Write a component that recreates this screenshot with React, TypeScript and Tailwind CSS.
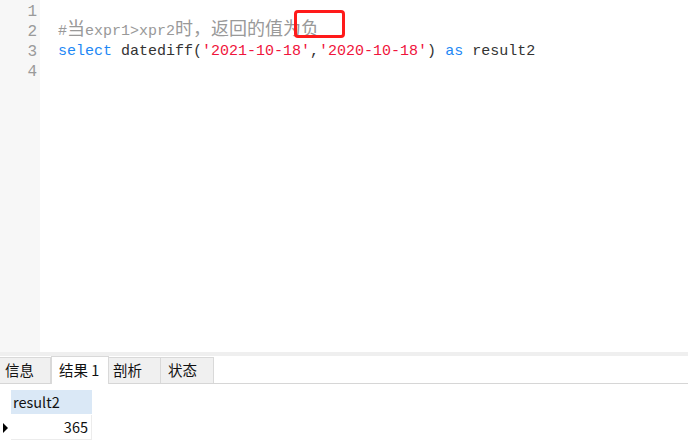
import React from "react";

const mono = { fontFamily: '"Liberation Mono", "DejaVu Sans Mono", monospace' };
const cjk = "font-['Noto_Sans_CJK_SC',sans-serif] text-[18px] leading-[10px]";

export default function App() {
  return (
    <div className="relative w-[688px] h-[440px] bg-white flex flex-col overflow-hidden font-['Noto_Sans_CJK_SC',sans-serif]">
      {/* Editor */}
      <div className="flex h-[352px]">
        <div className="w-[40px] bg-[#f7f7f7] pt-[2px] text-right pr-[3px] text-[16px] leading-[20px] text-[#9a9a9a]" style={mono}>
          <div className="h-[20px]">1</div>
          <div className="h-[20px]">2</div>
          <div className="h-[20px]">3</div>
          <div className="h-[20px]">4</div>
        </div>
        <div className="flex-1 pl-[18px] pt-[2px] text-[15px] leading-[20px] text-[#333] whitespace-pre" style={mono}>
          <div className="h-[20px]">&nbsp;</div>
          <div className="h-[20px] text-[#999]">
            #<span className={cjk}>当</span>expr1&gt;xpr2<span className={cjk}>时，返回的值为负</span>
          </div>
          <div className="h-[20px]">
            <span className="text-[#1e88f5]">select</span> datediff(
            <span className="text-[#f0143c]">'2021-10-18'</span>,
            <span className="text-[#f0143c]">'2020-10-18'</span>) <span className="text-[#1e88f5]">as</span> result2
          </div>
          <div className="h-[20px]">&nbsp;</div>
        </div>
      </div>
      {/* Splitter */}
      <div className="h-[4px] bg-[#efefef]" />
      {/* Tabs */}
      <div className="h-[28px] flex items-end border-b border-[#d6d6d6] text-[14.5px] text-[#111]">
        <div className="w-[51px] h-[26px] bg-[#f0f0f0] border-r border-t border-[#d9d9d9] flex items-center pl-[5px] leading-none">信息</div>
        <div className="w-[58px] h-[28px] bg-white border-l border-r border-t border-[#d9d9d9] -mb-[1px] flex items-center pl-[7px] leading-none">结果 1</div>
        <div className="w-[52px] h-[26px] bg-[#f0f0f0] border-r border-t border-[#d9d9d9] flex items-center pl-[4px] leading-none">剖析</div>
        <div className="w-[53px] h-[26px] bg-[#f0f0f0] border-r border-t border-[#d9d9d9] flex items-center pl-[7px] leading-none">状态</div>
      </div>
      {/* Grid */}
      <div className="pt-[6px] text-[14.5px] text-[#111]">
        <div className="flex h-[25px]">
          <div className="w-[11px]" />
          <div className="w-[81px] bg-[#dae8f6] border-b border-white flex items-center pl-[2px]">result2</div>
        </div>
        <div className="flex h-[25px]">
          <div className="w-[11px] flex items-center pl-[3px]">
            <svg width="5" height="10" viewBox="0 0 5 10"><path d="M0 0 L5 5 L0 10 Z" fill="#000" /></svg>
          </div>
          <div className="w-[81px] border-r border-b border-[#ececec] flex items-center justify-end pr-[3px]">365</div>
        </div>
      </div>
      {/* Red highlight box */}
      <div className="absolute left-[294px] top-[10px] w-[51px] h-[28px] border-[3px] border-[#ff1a1a] rounded-[4px]" />
    </div>
  );
}
